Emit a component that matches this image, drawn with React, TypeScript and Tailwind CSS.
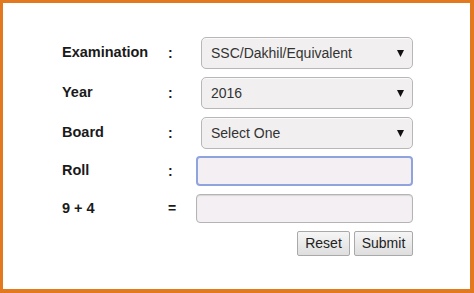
import React from "react";

const Arrow = () => (
  <svg width="7" height="7" viewBox="0 0 7 7" className="absolute right-[8px] top-[12px]">
    <polygon points="0,0 7,0 3.5,7" fill="#111" />
  </svg>
);

const Select = ({ value }: { value: string }) => (
  <div className="relative ml-[5px] h-[32px] w-[212px] rounded-[5px] border border-[#b9b6b8] bg-[#f1eff0] pl-[9px] text-[14px] leading-[30px] text-[#333] shadow-[inset_0_1px_0_#fafafa]">
    {value}
    <Arrow />
  </div>
);

const Row = ({ label, sep, children, h }: { label: string; sep: string; children: React.ReactNode; h: string }) => (
  <div className={`flex items-center ${h}`}>
    <div className="w-[106px] text-[14.5px] font-bold text-[#1a1a1a]">{label}</div>
    <div className="w-[28px] text-[14px] font-bold text-[#1a1a1a]">{sep}</div>
    {children}
  </div>
);

export default function App() {
  return (
    <div
      className="h-[293px] w-[474px] border-t-[3px] border-l-[3px] border-r-[4px] border-b-[4px] border-[#e2791f] bg-white"
      style={{ fontFamily: '"Liberation Sans", Arial, sans-serif' }}
    >
      <div className="flex flex-col pl-[59px] pt-[34px]">
        <Row label="Examination" sep=":" h="h-[32px]">
          <Select value="SSC/Dakhil/Equivalent" />
        </Row>
        <div className="h-[8px]" />
        <Row label="Year" sep=":" h="h-[32px]">
          <Select value="2016" />
        </Row>
        <div className="h-[8px]" />
        <Row label="Board" sep=":" h="h-[32px]">
          <Select value="Select One" />
        </Row>
        <div className="h-[7px]" />
        <Row label="Roll" sep=":" h="h-[30px]">
          <div className="h-[30px] w-[217px] rounded-[4px] border-2 border-[#8fa3dd] bg-[#f3eff2]" />
        </Row>
        <div className="h-[8px]" />
        <Row label="9 + 4" sep="=" h="h-[29px]">
          <div className="h-[29px] w-[217px] rounded-[4px] border border-[#b5b3b4] bg-[#f3eff2] shadow-[inset_0_1px_1px_#d8d6d7]" />
        </Row>
        <div className="h-[8px]" />
        <div className="flex w-[351px] justify-end gap-[4px]">
          <button className="h-[25px] w-[53px] rounded-[2px] border border-[#a9a9a9] bg-gradient-to-b from-[#f6f6f6] to-[#dedede] text-[14px] text-[#222]">
            Reset
          </button>
          <button className="h-[25px] w-[59px] rounded-[2px] border border-[#a9a9a9] bg-gradient-to-b from-[#f6f6f6] to-[#dedede] text-[14px] text-[#222]">
            Submit
          </button>
        </div>
      </div>
    </div>
  );
}
